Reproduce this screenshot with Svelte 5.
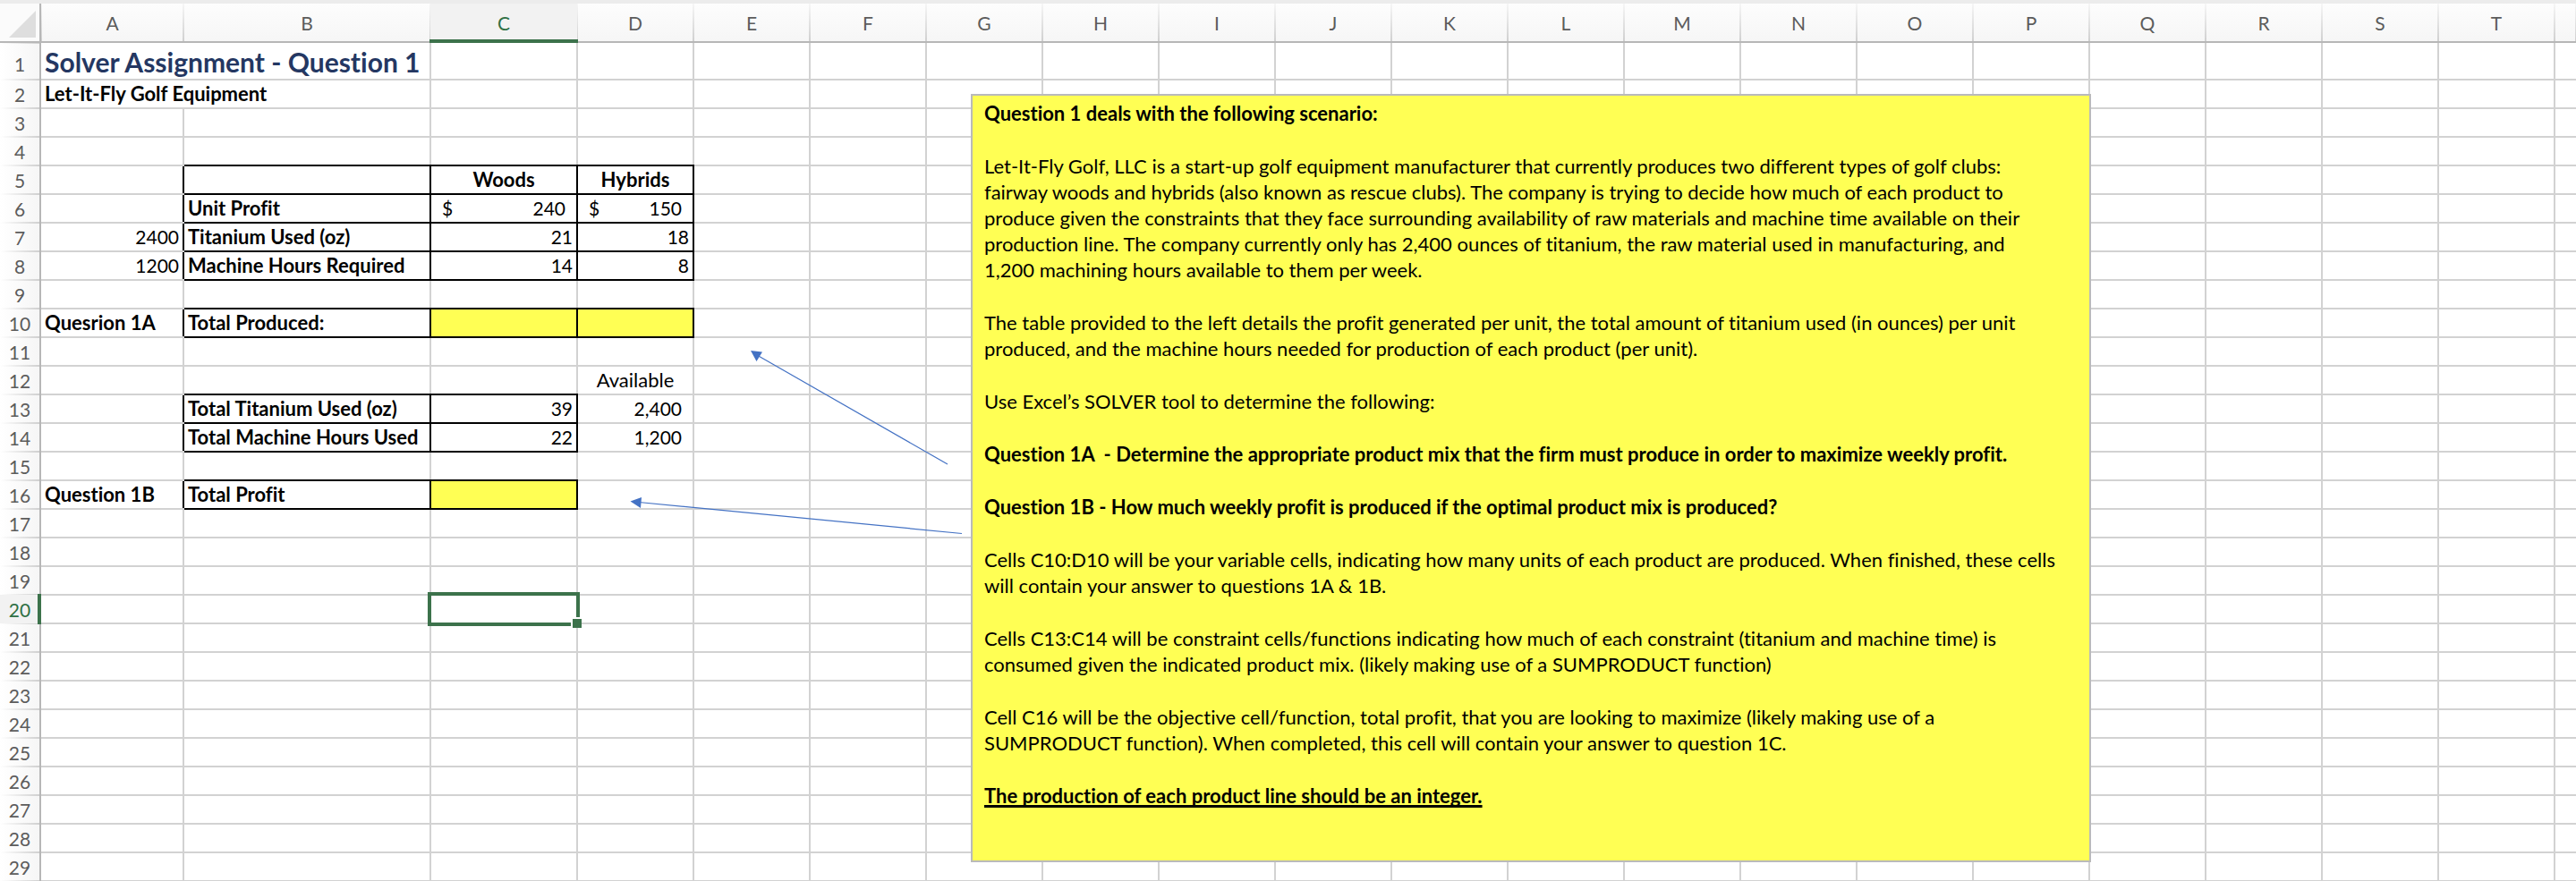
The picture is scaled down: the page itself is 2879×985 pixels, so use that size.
<script>
  const letters = 'ABCDEFGHIJKLMNOPQRSTU'.split('');
  const widths = { A: 160, B: 276, C: 164 };
  const rows = Array.from({ length: 29 }, (_, i) => i + 1);

  const cells = {
    A1: { text: 'Solver Assignment - Question 1', cls: 'title', span: 2 },
    A2: { text: 'Let-It-Fly Golf Equipment', cls: 'bold', span: 2 },
    C5: { text: 'Woods', cls: 'bold center' },
    D5: { text: 'Hybrids', cls: 'bold center' },
    B6: { text: 'Unit Profit', cls: 'bold' },
    C6: { money: '240', cls: 'num' },
    D6: { money: '150', cls: 'num' },
    A7: { text: '2400', cls: 'num' },
    B7: { text: 'Titanium Used (oz)', cls: 'bold' },
    C7: { text: '21', cls: 'num' },
    D7: { text: '18', cls: 'num' },
    A8: { text: '1200', cls: 'num' },
    B8: { text: 'Machine Hours Required', cls: 'bold' },
    C8: { text: '14', cls: 'num' },
    D8: { text: '8', cls: 'num' },
    A10: { text: 'Quesrion 1A', cls: 'bold' },
    B10: { text: 'Total Produced:', cls: 'bold' },
    C10: { cls: 'fill' },
    D10: { cls: 'fill' },
    D12: { text: 'Available', cls: 'center' },
    B13: { text: 'Total Titanium Used (oz)', cls: 'bold' },
    C13: { text: '39', cls: 'num' },
    D13: { text: '2,400', cls: 'num comma' },
    B14: { text: 'Total Machine Hours Used', cls: 'bold' },
    C14: { text: '22', cls: 'num' },
    D14: { text: '1,200', cls: 'num comma' },
    A16: { text: 'Question 1B', cls: 'bold' },
    B16: { text: 'Total Profit', cls: 'bold' },
    C16: { cls: 'fill' }
  };

  // Outlined ranges: first column, last column, first row, last row
  const ranges = [
    [1, 3, 5, 8],
    [1, 3, 10, 10],
    [1, 2, 13, 14],
    [1, 2, 16, 16]
  ];
  const boxed = (c, r) => ranges.some(([a, b, t, u]) => c >= a && c <= b && r >= t && r <= u);

  function classes(c, r) {
    const here = boxed(c, r);
    const list = [cells[letters[c] + r]?.cls ?? ''];
    if (here || boxed(c - 1, r)) list.push('dl');
    if (here || boxed(c + 1, r)) list.push('dr');
    if (here || boxed(c, r - 1)) list.push('dt');
    if (here || boxed(c, r + 1)) list.push('db');
    return list.join(' ');
  }
</script>

<main>
  <table>
    <colgroup>
      <col class="rowhead" />
      {#each letters as l}
        <col style:width={l === 'U' ? 'auto' : `${widths[l] ?? 130}px`} />
      {/each}
    </colgroup>
    <thead>
      <tr>
        <th class="corner" aria-label="Select all">
          <svg width="30" height="30" viewBox="0 0 30 30" aria-hidden="true"><path d="M30 0V30H0Z" fill="#dedede" /></svg>
        </th>
        {#each letters as l}
          <th scope="col" class:active={l === 'C'}>{l === 'U' ? '' : l}</th>
        {/each}
      </tr>
    </thead>
    <tbody>
      {#each rows as r}
        <tr class:first={r === 1}>
          <th scope="row" class:active={r === 20}>{r}</th>
          {#each letters as l, c}
            {@const cell = cells[l + r]}
            {#if !(r < 3 && l === 'B')}
              <td class={classes(c, r)} colspan={cell?.span ?? 1}>
                {#if cell?.money}
                  <div class="money"><span>$</span><span>{cell.money}</span></div>
                {:else if cell?.text}
                  {cell.text}
                {:else if l === 'C' && r === 20}
                  <div class="selection"><i></i></div>
                {/if}
              </td>
            {/if}
          {/each}
        </tr>
      {/each}
    </tbody>
  </table>

  <svg class="arrows" width="400" height="230" viewBox="690 380 400 230" aria-hidden="true">
    <g stroke="#4472c4" stroke-width="1.2" fill="#4472c4">
      <path d="M846 397L1059 519M714 561.500L1075 596.500" />
      <path stroke="none" d="M839 392L852 393.500L845.500 404ZM704.500 560.500L717 556L716 568Z" />
    </g>
  </svg>

  <aside>
    <p><b>Question 1 deals with the following scenario:</b></p>
    <p>
      Let-It-Fly Golf, LLC is a start-up golf equipment manufacturer that currently produces two different types of golf clubs:<br />
      fairway woods and hybrids (also known as rescue clubs). The company is trying to decide how much of each product to<br />
      produce given the constraints that they face surrounding availability of raw materials and machine time available on their<br />
      production line. The company currently only has 2,400 ounces of titanium, the raw material used in manufacturing, and<br />
      1,200 machining hours available to them per week.
    </p>
    <p>
      The table provided to the left details the profit generated per unit, the total amount of titanium used (in ounces) per unit<br />
      produced, and the machine hours needed for production of each product (per unit).
    </p>
    <p>Use Excel’s SOLVER tool to determine the following:</p>
    <p><b>Question 1A &nbsp;- Determine the appropriate product mix that the firm must produce in order to maximize weekly profit.</b></p>
    <p><b>Question 1B - How much weekly profit is produced if the optimal product mix is produced?</b></p>
    <p>
      Cells C10:D10 will be your variable cells, indicating how many units of each product are produced. When finished, these cells<br />
      will contain your answer to questions 1A &amp; 1B.
    </p>
    <p>
      Cells C13:C14 will be constraint cells/functions indicating how much of each constraint (titanium and machine time) is<br />
      consumed given the indicated product mix. (likely making use of a SUMPRODUCT function)
    </p>
    <p>
      Cell C16 will be the objective cell/function, total profit, that you are looking to maximize (likely making use of a<br />
      SUMPRODUCT function). When completed, this cell will contain your answer to question 1C.
    </p>
    <p><b><u>The production of each product line should be an integer.</u></b></p>
  </aside>
</main>

<style>
  :global(body) {
    margin: 0;
    background: #fff;
    overflow: hidden;
  }
  main {
    position: relative;
    border-top: 4px solid #a3a3a3;
    border-image: linear-gradient(#ececec 50%, #a3a3a3 50%) 4;
    font-family: Lato, 'Open Sans', sans-serif;
    font-size: 22px;
    font-variant-ligatures: none;
    line-height: 26px;
    color: #000;
  }
  table {
    width: 100%;
    table-layout: fixed;
    border-collapse: collapse;
  }
  .rowhead {
    width: 45px;
  }
  th,
  td {
    box-sizing: border-box;
    height: 32px;
    padding: 1px 4px 2px;
    white-space: nowrap;
    vertical-align: bottom;
  }
  td {
    position: relative;
    border: 2px solid #d2d2d2;
    text-align: left;
  }
  td:last-child {
    border-right: 0;
  }
  th {
    padding: 1px 0 2px;
    font-size: 21px;
    font-weight: 400;
    color: #5c5c5c;
    text-align: center;
  }
  thead th {
    height: 43px;
    padding: 2px 0 0;
    vertical-align: middle;
    border-bottom: 2px solid #b7b7b7;
    background:
      linear-gradient(#f6f6f6, #d0d0d0) left / 1px 100% no-repeat,
      linear-gradient(#f6f6f6, #d0d0d0) right / 1px 100% no-repeat,
      linear-gradient(#fdfdfd, #f6f6f6);
  }
  thead th.active {
    position: relative;
    color: #2f7044;
    background: #f2f2f2;
  }
  thead th.active::after {
    content: '';
    position: absolute;
    inset: auto -1px -2px;
    height: 4px;
    background: #3c724b;
  }
  thead .corner {
    border-right: 2px solid #b7b7b7;
    background: #fbfbfb;
    padding: 4px 4px 0 0;
    text-align: right;
  }
  .corner svg {
    display: block;
    margin-left: auto;
  }
  tbody th {
    border-right: 2px solid #b7b7b7;
    background:
      linear-gradient(90deg, #fff, #d0d0d0) bottom / 100% 1px no-repeat,
      linear-gradient(90deg, #fff, #d0d0d0) top / 100% 1px no-repeat,
      linear-gradient(90deg, #fff, #f6f6f6);
  }
  tbody th.active {
    position: relative;
    color: #2f7044;
    background: #f2f2f2;
  }
  tbody th.active::after {
    content: '';
    position: absolute;
    inset: -1px -2px -1px auto;
    width: 4px;
    background: #3c724b;
  }
  .first th,
  .first td {
    height: 42px;
  }
  .first th {
    padding-bottom: 4px;
  }
  .bold {
    font-weight: 700;
  }
  .title {
    font-size: 30px;
    line-height: 34px;
    font-weight: 700;
    color: #243762;
  }
  .center {
    text-align: center;
  }
  .num {
    font-size: 21px;
    text-align: right;
  }
  .comma {
    padding-right: 12px;
  }
  .money {
    display: flex;
    justify-content: space-between;
    padding: 0 8px;
  }
  .fill {
    background: #ffff54;
  }
  td.dl {
    border-left-color: #000;
  }
  td.dr {
    border-right-color: #000;
  }
  td.dt {
    border-top-color: #000;
  }
  td.db {
    border-bottom-color: #000;
  }
  .selection {
    position: absolute;
    inset: -4px;
    z-index: 1;
    border: 4px solid #3c724b;
  }
  .selection i {
    position: absolute;
    right: -6px;
    bottom: -6px;
    width: 10px;
    height: 10px;
    background: #3c724b;
    box-shadow: -2px -2px 0 #fff;
  }
  .arrows {
    position: absolute;
    left: 690px;
    top: 376px;
  }
  aside {
    position: absolute;
    left: 1085px;
    top: 101px;
    box-sizing: border-box;
    width: 1252px;
    padding: 5px 13px 58px;
    border: 2px solid #bababa;
    background: #ffff54;
    line-height: 29px;
    white-space: nowrap;
  }
  p {
    margin: 0 0 30px;
  }
  p:last-child {
    margin: 0;
  }
  u {
    text-decoration-thickness: 3px;
    text-underline-offset: 2px;
    text-decoration-skip-ink: none;
  }
</style>
